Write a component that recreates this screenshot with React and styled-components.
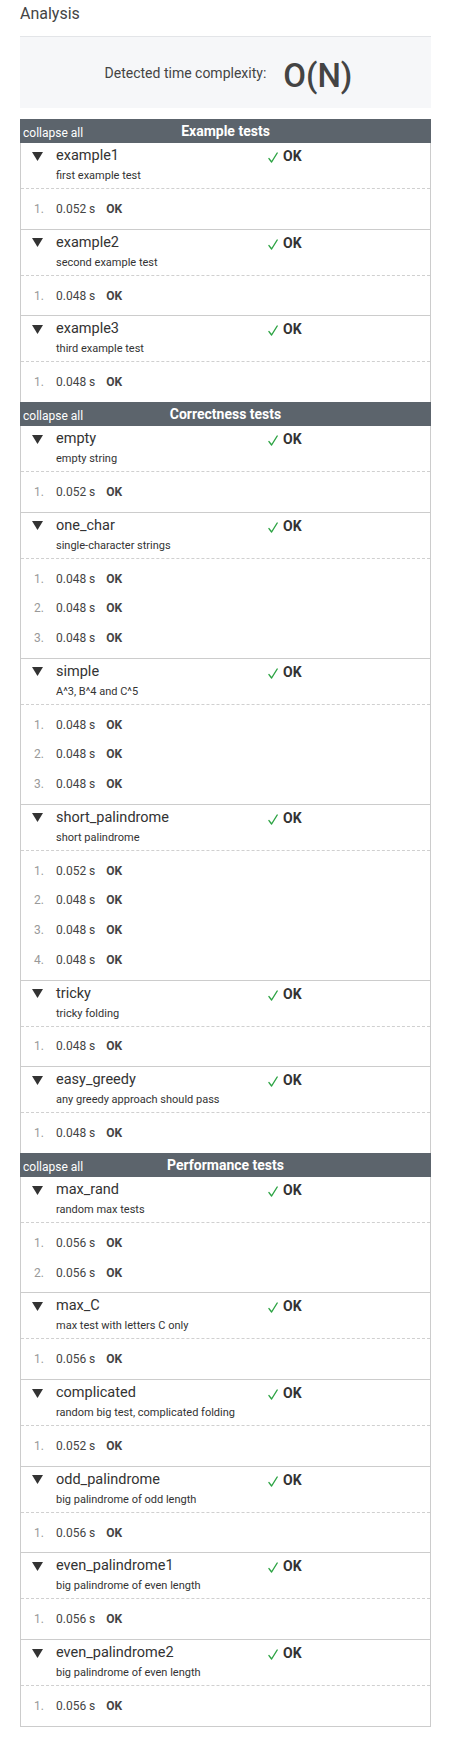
import React from "react";
import styled, { createGlobalStyle } from "styled-components";

const Global = createGlobalStyle`
  html, body { margin: 0; padding: 0; background: #fff; }
  body { font-family: Roboto, "Noto Sans", "Liberation Sans", sans-serif; color: #333; }
`;

const Page = styled.div`
  width: 452px;
  box-sizing: border-box;
  padding: 4px 21px 12px 20px;
`;

const Title = styled.h2`
  margin: 0;
  font-size: 16px;
  line-height: 20px;
  font-weight: 400;
  color: #444;
`;

const ComplexityBox = styled.div`
  margin-top: 12px;
  height: 72px;
  box-sizing: border-box;
  border-top: 1px solid #e3e5e8;
  background: #f6f7f9;
  display: flex;
  align-items: center;
  justify-content: center;
  gap: 17px;
  padding-left: 6px;
`;

const ComplexityLabel = styled.span`
  font-size: 14px;
  color: #444;
`;

const ComplexityValue = styled.span`
  font-size: 33px;
  font-weight: 500;
  color: #444;
  position: relative;
  top: 3px;
`;

const Results = styled.div`
  margin-top: 11px;
  border: 1px solid #cccccc;
  border-top: none;
`;

const SectionHeader = styled.div`
  height: 24px;
  background: #5c646c;
  color: #fff;
  display: grid;
  grid-template-columns: 1fr auto 1fr;
  align-items: center;
  margin: 0 -1px;
`;

const CollapseAll = styled.span`
  font-size: 12px;
  padding-left: 3px;
  padding-top: 3px;
`;

const SectionTitle = styled.span`
  font-size: 14px;
  font-weight: 700;
`;

const Test = styled.div`
  border-bottom: 1px solid #cccccc;
  &:last-child { border-bottom: none; }
`;

const Section = styled.div``;

const TestHead = styled.div`
  display: grid;
  grid-template-columns: 35px 212px 1fr;
  grid-template-rows: 20px 16px;
  row-gap: 2px;
  padding: 3px 0 4px;
  border-bottom: 1px dashed #d0d0d0;
`;

const Arrow = styled.svg`
  width: 11px;
  height: 9px;
  justify-self: start;
  align-self: center;
  margin-left: 11px;
`;

const TestName = styled.span`
  font-size: 14.5px;
  line-height: 20px;
  color: #333;
`;

const Status = styled.span`
  display: flex;
  align-items: center;
  gap: 5px;
  font-size: 14px;
  font-weight: 700;
  color: #333;
  line-height: 20px;
`;

const Check = styled.svg`
  width: 10px;
  height: 11px;
  margin-top: 3px;
`;

const Description = styled.span`
  grid-column: 2 / 4;
  font-size: 11px;
  line-height: 16px;
  color: #333;
`;

const RunList = styled.div`
  padding: 5px 0;
`;

const Run = styled.div`
  height: 29.7px;
  display: grid;
  grid-template-columns: 35px auto auto 1fr;
  align-items: center;
  font-size: 12px;
  color: #444;
`;

const RunNo = styled.span`
  color: #999;
  text-align: right;
  padding-right: 12px;
`;

const RunTime = styled.span``;

const RunOk = styled.span`
  font-weight: 700;
  margin-left: 11px;
`;

const sections = [
  {
    title: "Example tests",
    tests: [
      ["example1", "first example test", ["0.052"]],
      ["example2", "second example test", ["0.048"]],
      ["example3", "third example test", ["0.048"]],
    ],
  },
  {
    title: "Correctness tests",
    tests: [
      ["empty", "empty string", ["0.052"]],
      ["one_char", "single-character strings", ["0.048", "0.048", "0.048"]],
      ["simple", "A^3, B^4 and C^5", ["0.048", "0.048", "0.048"]],
      ["short_palindrome", "short palindrome", ["0.052", "0.048", "0.048", "0.048"]],
      ["tricky", "tricky folding", ["0.048"]],
      ["easy_greedy", "any greedy approach should pass", ["0.048"]],
    ],
  },
  {
    title: "Performance tests",
    tests: [
      ["max_rand", "random max tests", ["0.056", "0.056"]],
      ["max_C", "max test with letters C only", ["0.056"]],
      ["complicated", "random big test, complicated folding", ["0.052"]],
      ["odd_palindrome", "big palindrome of odd length", ["0.056"]],
      ["even_palindrome1", "big palindrome of even length", ["0.056"]],
      ["even_palindrome2", "big palindrome of even length", ["0.056"]],
    ],
  },
];

function TestBlock({ name, desc, runs }) {
  return (
    <Test>
      <TestHead>
        <Arrow viewBox="0 0 11 9">
          <polygon points="0,0 11,0 5.5,9" fill="#333" />
        </Arrow>
        <TestName>{name}</TestName>
        <Status>
          <Check viewBox="0 0 10 11">
            <path d="M1 6.6 L3.6 10 L9.2 1" fill="none" stroke="#2ca343" strokeWidth="1.4" strokeLinecap="round" strokeLinejoin="round" />
          </Check>
          OK
        </Status>
        <Description>{desc}</Description>
      </TestHead>
      <RunList>
        {runs.map((t, i) => (
          <Run key={i}>
            <RunNo>{i + 1}.</RunNo>
            <RunTime>{t} s</RunTime>
            <RunOk>OK</RunOk>
          </Run>
        ))}
      </RunList>
    </Test>
  );
}

export default function App() {
  return (
    <>
      <Global />
      <Page>
        <Title>Analysis</Title>
        <ComplexityBox>
          <ComplexityLabel>Detected time complexity:</ComplexityLabel>
          <ComplexityValue>O(N)</ComplexityValue>
        </ComplexityBox>
        <Results>
          {sections.map((s) => (
            <Section key={s.title}>
              <SectionHeader>
                <CollapseAll>collapse all</CollapseAll>
                <SectionTitle>{s.title}</SectionTitle>
                <span />
              </SectionHeader>
              {s.tests.map(([n, d, r]) => (
                <TestBlock key={n} name={n} desc={d} runs={r} />
              ))}
            </Section>
          ))}
        </Results>
      </Page>
    </>
  );
}
